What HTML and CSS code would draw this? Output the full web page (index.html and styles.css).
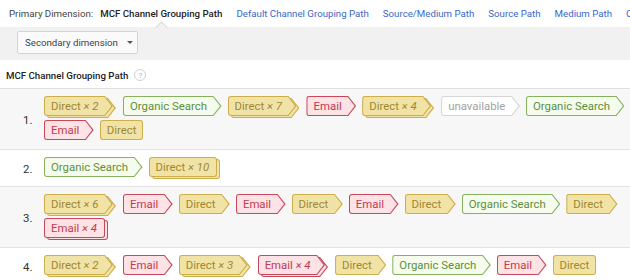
FILE: index.html
```html
<!DOCTYPE html>
<html lang="en">
<head>
<meta charset="UTF-8" />
<title>MCF Channel Grouping Path</title>
<link rel="stylesheet" href="styles.css">
</head>
<body>
  <div class="page">
    <div class="dims">
      <span class="dims-label">Primary Dimension:</span>
      <span class="dim current">MCF Channel Grouping Path</span>
      <a class="dim link">Default Channel Grouping Path</a>
      <a class="dim link">Source/Medium Path</a>
      <a class="dim link">Source Path</a>
      <a class="dim link">Medium Path</a>
      <a class="dim link">Other</a>
    </div>

    <div class="toolbar">
      <button class="secondary">Secondary dimension <span class="caret"></span></button>
    </div>

    <div class="table-head">MCF Channel Grouping Path <span class="help">?</span></div>

    <div class="row alt">
      <div class="num">1.</div>
      <div class="path">
        <span class="node direct stack"><span class="face"><span class="label">Direct <i>× 2</i></span></span></span>
        <span class="node organic"><span class="face"><span class="label">Organic Search</span></span></span>
        <span class="node direct stack"><span class="face"><span class="label">Direct <i>× 7</i></span></span></span>
        <span class="node email"><span class="face"><span class="label">Email</span></span></span>
        <span class="node direct stack"><span class="face"><span class="label">Direct <i>× 4</i></span></span></span>
        <span class="node na"><span class="face"><span class="label">unavailable</span></span></span>
        <span class="node organic"><span class="face"><span class="label">Organic Search</span></span></span>
        <span class="node email"><span class="face"><span class="label">Email</span></span></span>
        <span class="node direct end"><span class="face"><span class="label">Direct</span></span></span>
      </div>
    </div>

    <div class="row">
      <div class="num">2.</div>
      <div class="path">
        <span class="node organic"><span class="face"><span class="label">Organic Search</span></span></span>
        <span class="node direct stack end"><span class="face"><span class="label">Direct <i>× 10</i></span></span></span>
      </div>
    </div>

    <div class="row alt">
      <div class="num">3.</div>
      <div class="path">
        <span class="node direct stack"><span class="face"><span class="label">Direct <i>× 6</i></span></span></span>
        <span class="node email"><span class="face"><span class="label">Email</span></span></span>
        <span class="node direct"><span class="face"><span class="label">Direct</span></span></span>
        <span class="node email"><span class="face"><span class="label">Email</span></span></span>
        <span class="node direct"><span class="face"><span class="label">Direct</span></span></span>
        <span class="node email"><span class="face"><span class="label">Email</span></span></span>
        <span class="node direct"><span class="face"><span class="label">Direct</span></span></span>
        <span class="node organic"><span class="face"><span class="label">Organic Search</span></span></span>
        <span class="node direct"><span class="face"><span class="label">Direct</span></span></span>
        <span class="node email stack end"><span class="face"><span class="label">Email <i>× 4</i></span></span></span>
      </div>
    </div>

    <div class="row">
      <div class="num">4.</div>
      <div class="path">
        <span class="node direct stack"><span class="face"><span class="label">Direct <i>× 2</i></span></span></span>
        <span class="node email"><span class="face"><span class="label">Email</span></span></span>
        <span class="node direct stack"><span class="face"><span class="label">Direct <i>× 3</i></span></span></span>
        <span class="node email stack"><span class="face"><span class="label">Email <i>× 4</i></span></span></span>
        <span class="node direct"><span class="face"><span class="label">Direct</span></span></span>
        <span class="node organic"><span class="face"><span class="label">Organic Search</span></span></span>
        <span class="node email"><span class="face"><span class="label">Email</span></span></span>
        <span class="node direct end"><span class="face"><span class="label">Direct</span></span></span>
      </div>
    </div>
  </div>
</body>
</html>
```

FILE: styles.css
```css
* {
  box-sizing: border-box;
  margin: 0;
  padding: 0;
}

html, body {
  overflow: hidden;
}

body {
  background: #fff;
  font-family: Roboto, "Liberation Sans", sans-serif;
  color: #333;
}

.page {
  width: 660px;
}

/* dimension tabs */
.dims {
  display: flex;
  gap: 14px;
  height: 27px;
  padding-left: 9px;
  font-size: 9.7px;
  line-height: 27px;
  white-space: nowrap;
}

.dims-label {
  color: #444;
  margin-right: -7px;
}

.dim.current {
  position: relative;
  font-weight: 500;
  color: #222;
}

.dim.current::after {
  content: "";
  position: absolute;
  left: calc(50% - 4px);
  top: 23px;
  width: 8px;
  height: 8px;
  background: #f1f1f1;
  border-top: 1px solid #dcdcdc;
  border-left: 1px solid #dcdcdc;
  transform: rotate(45deg);
}

.dim.link {
  color: #3a67c8;
}

.toolbar {
  background: #f1f1f1;
  height: 33px;
  padding: 4px 17px;
}

.secondary {
  display: flex;
  align-items: center;
  width: 121px;
  height: 23px;
  padding-left: 7px;
  border: 1px solid #d4d4d4;
  border-radius: 2px;
  background: #fafafa;
  font-family: Roboto, "Liberation Sans", sans-serif;
  font-size: 9.7px;
  color: #444;
}

.caret {
  margin-left: 9px;
  border-left: 3px solid transparent;
  border-right: 3px solid transparent;
  border-top: 3.5px solid #555;
}

.table-head {
  display: flex;
  align-items: center;
  height: 29px;
  padding: 2px 0 0 6px;
  border-bottom: 1px solid #e0e0e0;
  font-size: 9.7px;
  font-weight: 500;
  color: #222;
}

.help {
  display: inline-flex;
  align-items: center;
  justify-content: center;
  width: 12px;
  height: 12px;
  margin-left: 6px;
  border: 1px solid #d0d0d0;
  border-radius: 50%;
  font-size: 8px;
  font-weight: 400;
  color: #b0b0b0;
}

/* path rows */
.row {
  display: flex;
  padding: 7px 0 5px;
  border-bottom: 1px solid #e3e3e3;
}

.row.alt {
  background: #f7f7f7;
}

.num {
  align-self: center;
  width: 44px;
  padding-left: 23px;
  font-size: 11.4px;
  color: #333;
}

.path {
  display: flex;
  flex-wrap: wrap;
  width: 606px;
}

.node {
  position: relative;
  height: 20px;
  margin: 0 6px 4px 0;
  font-size: 11.4px;
}

.node.stack {
  margin-right: 10px;
}

.face {
  position: relative;
  z-index: 1;
  display: block;
  height: 20px;
  padding: 1px 1.5px 1px 1px;
  background: var(--edge);
  border-radius: 3px 0 0 3px;
  clip-path: polygon(0 0, calc(100% - 8px) 0, 100% 50%, calc(100% - 8px) 100%, 0 100%);
}

.label {
  display: block;
  height: 18px;
  line-height: 18px;
  padding: 0 13px 0 6px;
  background: var(--fill);
  color: var(--ink);
  border-radius: 2px 0 0 2px;
  white-space: nowrap;
  clip-path: polygon(0 0, calc(100% - 7px) 0, 100% 50%, calc(100% - 7px) 100%, 0 100%);
}

.node.stack::before,
.node.stack::after {
  content: "";
  position: absolute;
  z-index: 0;
}

.node.stack::before {
  left: 3px;
  top: 2px;
  right: -3px;
  bottom: -2px;
  background: var(--edge);
  border-radius: 3px 0 0 3px;
  clip-path: polygon(0 0, calc(100% - 8px) 0, 100% 50%, calc(100% - 8px) 100%, 0 100%);
}

.node.stack::after {
  left: 4px;
  top: 3px;
  right: -1.5px;
  bottom: -1px;
  background: var(--fill);
  border-radius: 2px 0 0 2px;
  clip-path: polygon(0 0, calc(100% - 7px) 0, 100% 50%, calc(100% - 7px) 100%, 0 100%);
}

.node.end .face,
.node.end.stack::before {
  padding: 1px;
  border-radius: 3px;
  clip-path: none;
}

.node.end .label,
.node.end.stack::after {
  padding: 0 6px;
  border-radius: 2px;
  clip-path: none;
}

.node.end.stack .label {
  padding-right: 7px;
}

.node.end.stack::after {
  right: -2px;
}

.direct {
  --edge: #ccae4c;
  --fill: #f1e3a6;
  --ink: #a08833;
}

.email {
  --edge: #c8485a;
  --fill: #fde2e6;
  --ink: #c23a50;
}

.organic {
  --edge: #86b260;
  --fill: #f5fcee;
  --ink: #5c8f3c;
}

.na {
  --edge: #d6d6d6;
  --fill: #fff;
  --ink: #a2a2a2;
}
```
